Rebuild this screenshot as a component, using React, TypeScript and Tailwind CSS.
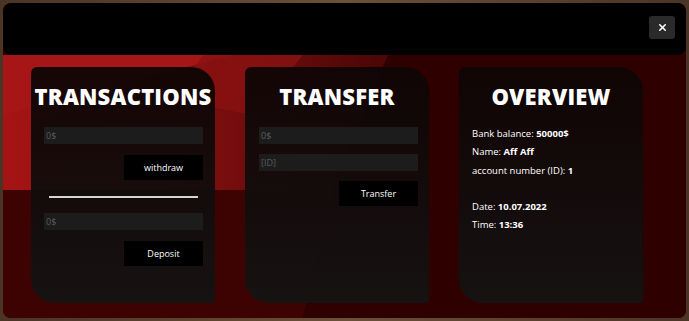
import React, { useState } from 'react';
import { X } from 'lucide-react';

const font = { fontFamily: '"Open Sans", "Liberation Sans", sans-serif' };

const Card: React.FC<{ title: string; children: React.ReactNode }> = ({ title, children }) => (
  <div className="w-[184px] h-[236px] rounded-tl-[6px] rounded-tr-[24px] rounded-bl-[24px] rounded-br-[3px] bg-gradient-to-b from-[#0f0505]/95 to-[#141313]/95 flex flex-col">
    <h2 className="pt-[18px] text-center text-white font-extrabold text-[22px] leading-[22px] tracking-[0.2px] whitespace-nowrap">
      {title}
    </h2>
    {children}
  </div>
);

const Field: React.FC<{ placeholder: string; value: string; onChange: (v: string) => void }> = ({ placeholder, value, onChange }) => (
  <input
    className="w-full h-[17px] bg-[#1d1c1c] px-[2px] text-[9px] text-white placeholder:text-[#5c5c5c] outline-none"
    placeholder={placeholder}
    value={value}
    onChange={e => onChange(e.target.value)}
  />
);

const Btn: React.FC<{ label: string }> = ({ label }) => (
  <button className="w-[79px] h-[25px] bg-black text-white text-[9px] self-end">{label}</button>
);

export default function App() {
  const [withdraw, setWithdraw] = useState('');
  const [deposit, setDeposit] = useState('');
  const [amount, setAmount] = useState('');
  const [target, setTarget] = useState('');

  return (
    <div className="w-[689px] h-[321px] bg-gradient-to-r from-[#4a3424] via-[#6b5038] to-[#4a3424] p-[3px]" style={font}>
      <div className="w-full h-full rounded-[8px] overflow-hidden flex flex-col bg-[#330000]">
        <div className="h-[52px] shrink-0 bg-black rounded-[8px] flex items-center justify-end pr-[11px] pb-[3px]">
          <button className="w-[26px] h-[23px] rounded-[3px] bg-[#2a2a2a] flex items-center justify-center text-white">
            <X size={11} strokeWidth={3.5} />
          </button>
        </div>
        <div className="relative flex-1">
          <svg className="absolute inset-0 w-full h-full" viewBox="0 0 683 263" preserveAspectRatio="none">
            <defs>
              <linearGradient id="g1" x1="0" y1="0" x2="1" y2="0">
                <stop offset="0" stopColor="#a51414" />
                <stop offset="0.55" stopColor="#7a0e0e" />
                <stop offset="1" stopColor="#4a0606" />
              </linearGradient>
            </defs>
            <rect width="683" height="263" fill="#330000" />
            <polygon points="0,0 385,0 330,135 0,135" fill="url(#g1)" />
            <polygon points="0,0 230,0 0,60" fill="#a71616" />
            <polygon points="200,0 300,0 250,60 170,45" fill="#8a1212" opacity="0.8" />
            <polygon points="0,135 330,135 300,263 0,263" fill="#3d0202" />
            <polygon points="330,135 385,0 683,0 683,263 300,263" fill="#2f0000" />
          </svg>
          <div className="relative flex pl-[28px] pt-[12px] gap-[30px]">
            <Card title="TRANSACTIONS">
              <div className="flex flex-col px-[13px] pr-[12px] mt-[20px]">
                <Field placeholder="0$" value={withdraw} onChange={setWithdraw} />
                <div className="h-[11px]" />
                <Btn label="withdraw" />
                <div className="h-[2px] bg-[#d4d4d4] mx-[5px] mt-[16px] mb-[15px]" />
                <Field placeholder="0$" value={deposit} onChange={setDeposit} />
                <div className="h-[11px]" />
                <Btn label="Deposit" />
              </div>
            </Card>
            <Card title="TRANSFER">
              <div className="flex flex-col pl-[14px] pr-[11px] mt-[20px]">
                <Field placeholder="0$" value={amount} onChange={setAmount} />
                <div className="h-[10px]" />
                <Field placeholder="[ID]" value={target} onChange={setTarget} />
                <div className="h-[10px]" />
                <Btn label="Transfer" />
              </div>
            </Card>
            <Card title="OVERVIEW">
              <div className="flex flex-col px-[13px] mt-[18px] text-white text-[9.5px] leading-[18.3px]">
                <p>Bank balance: <b>50000$</b></p>
                <p>Name: <b>Aff Aff</b></p>
                <p>account number (ID): <b>1</b></p>
                <p className="mt-[18.3px]">Date: <b>10.07.2022</b></p>
                <p>Time: <b>13:36</b></p>
              </div>
            </Card>
          </div>
        </div>
      </div>
    </div>
  );
}
